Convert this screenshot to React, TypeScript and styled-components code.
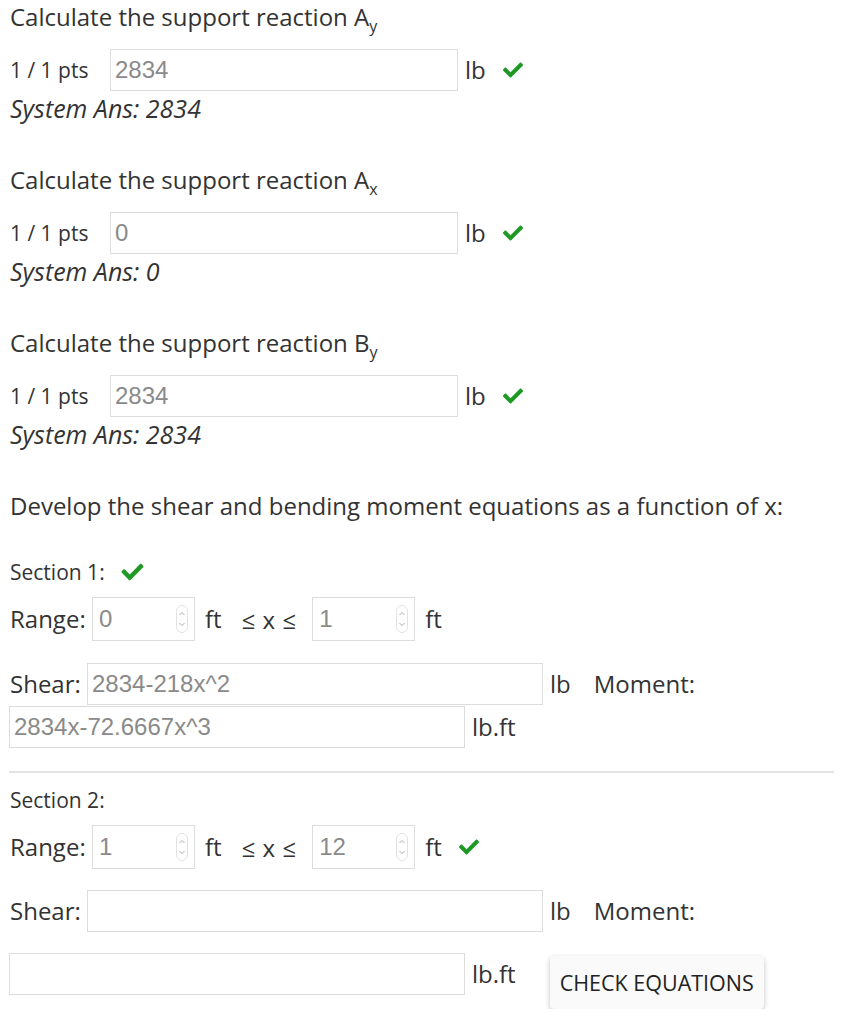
import React from "react";
import styled, { createGlobalStyle } from "styled-components";
import { FaCheck } from "react-icons/fa";

const Global = createGlobalStyle`
  html, body { margin: 0; padding: 0; background: #fff; }
  body { font-family: "Open Sans", "Noto Sans", sans-serif; color: #333; }
  input::-webkit-outer-spin-button, input::-webkit-inner-spin-button { -webkit-appearance: none; margin: 0; }
`;

const Page = styled.div`
  padding: 1px 10px 0 9px;
  width: 851px;
  box-sizing: border-box;
`;

const Question = styled.div`
  margin-bottom: 41px;
`;

const Heading = styled.div`
  font-size: 24px;
  line-height: 32px;
  padding-left: 1px;
  sub { font-size: 16px; vertical-align: -6px; line-height: 0; }
`;

const AnswerRow = styled.div`
  display: flex;
  align-items: center;
  margin-top: 16px;
`;

const Pts = styled.span`
  font-size: 21px;
  width: 101px;
  padding-left: 1px;
  box-sizing: border-box;
`;

const TextInput = styled.input<{ $w: number }>`
  width: ${(p) => p.$w}px;
  height: 42px;
  flex-shrink: 0;
  box-sizing: border-box;
  border: 1px solid #dcdcdc;
  border-radius: 0;
  padding: 0 4px;
  font-family: "Liberation Sans", Arial, sans-serif;
  font-size: 24px;
  color: #8a8a8a;
  background: #fff;
  outline: none;
`;

const Unit = styled.span<{ $ml?: number }>`
  font-size: 24px;
  line-height: 42px;
  margin-left: ${(p) => p.$ml ?? 7}px;
  white-space: nowrap;
`;

const Check = styled(FaCheck)<{ $big?: boolean }>`
  color: #1e9a24;
  width: ${(p) => (p.$big ? 27 : 24)}px;
  height: ${(p) => (p.$big ? 22 : 20)}px;
  margin-left: ${(p) => (p.$big ? 14 : 15)}px;
`;

const SystemAns = styled.div`
  font-size: 25px;
  font-style: italic;
  line-height: 30px;
  margin-top: 2px;
  padding-left: 1px;
`;

const SectionTitle = styled.div<{ $mt: number }>`
  font-size: 21px;
  line-height: 28px;
  margin-top: ${(p) => p.$mt}px;
  display: flex;
  align-items: center;
  padding-left: 1px;
`;

const RangeRow = styled.div`
  display: flex;
  align-items: center;
  margin-top: 11px;
  height: 44px;
`;

const Label = styled.span<{ $w: number }>`
  font-size: 24px;
  line-height: 42px;
  width: ${(p) => p.$w}px;
  flex-shrink: 0;
  padding-left: 1px;
  box-sizing: border-box;
`;

const NumWrap = styled.div`
  position: relative;
  width: 103px;
  height: 44px;
  flex-shrink: 0;
`;

const NumInput = styled(TextInput)`
  height: 44px;
  padding-left: 6px;
  -moz-appearance: textfield;
`;

const Spinner = styled.svg`
  position: absolute;
  right: 7px;
  top: 8px;
  width: 12px;
  height: 28px;
`;

const Leq = styled.span`
  font-size: 24px;
  margin: 0 16px 0 20px;
  word-spacing: 1px;
`;

const EqRow = styled.div<{ $mt: number }>`
  display: flex;
  align-items: flex-start;
  margin-top: ${(p) => p.$mt}px;
`;

const Divider = styled.hr`
  border: 0;
  border-top: 2px solid #e2e2e2;
  margin: 23px 7px 0 0;
`;

const Button = styled.button`
  margin: 3px 0 0 34px;
  height: 53px;
  padding: 0 10px;
  border: 0;
  border-radius: 4px;
  background: #fafafa;
  box-shadow: 0 2px 5px rgba(0, 0, 0, 0.25);
  font-family: "Open Sans", sans-serif;
  font-size: 21.5px;
  color: #222;
  text-transform: uppercase;
  white-space: nowrap;
`;

const Sub = ({ c }: { c: string }) => <sub>{c}</sub>;

const SpinIcon = () => (
  <Spinner viewBox="0 0 12 28">
    <rect x="0.5" y="0.5" width="11" height="27" rx="5.5" fill="#fff" stroke="#e2e2e2" />
    <path d="M3.5 10 L6 7.5 L8.5 10" fill="none" stroke="#aaa" strokeWidth="1" />
    <path d="M3.5 18 L6 20.5 L8.5 18" fill="none" stroke="#aaa" strokeWidth="1" />
  </Spinner>
);

const Num = ({ v }: { v: string }) => (
  <NumWrap>
    <NumInput $w={103} type="text" defaultValue={v} />
    <SpinIcon />
  </NumWrap>
);

const Reaction = ({ letter, sub, value }: { letter: string; sub: string; value: string }) => (
  <Question>
    <Heading>
      Calculate the support reaction {letter}
      <Sub c={sub} />
    </Heading>
    <AnswerRow>
      <Pts>1 / 1 pts</Pts>
      <TextInput $w={348} defaultValue={value} />
      <Unit>lb</Unit>
      <Check />
    </AnswerRow>
    <SystemAns>System Ans: {value}</SystemAns>
  </Question>
);

export default function App() {
  return (
    <Page>
      <Global />
      <Reaction letter="A" sub="y" value="2834" />
      <Reaction letter="A" sub="x" value="0" />
      <Reaction letter="B" sub="y" value="2834" />
      <Heading>Develop the shear and bending moment equations as a function of x:</Heading>

      <SectionTitle $mt={36}>
        Section 1:
        <Check $big />
      </SectionTitle>
      <RangeRow>
        <Label $w={83}>Range:</Label>
        <Num v="0" />
        <Unit $ml={10}>ft</Unit>
        <Leq>≤ x ≤</Leq>
        <Num v="1" />
        <Unit $ml={10}>ft</Unit>
      </RangeRow>
      <EqRow $mt={22}>
        <Label $w={78}>Shear:</Label>
        <TextInput $w={456} defaultValue="2834-218x^2" />
        <Unit>lb</Unit>
        <Unit $ml={23}>Moment:</Unit>
      </EqRow>
      <EqRow $mt={1}>
        <TextInput $w={456} defaultValue="2834x-72.6667x^3" />
        <Unit>lb.ft</Unit>
      </EqRow>
      <Divider />

      <SectionTitle $mt={13}>Section 2:</SectionTitle>
      <RangeRow>
        <Label $w={83}>Range:</Label>
        <Num v="1" />
        <Unit $ml={10}>ft</Unit>
        <Leq>≤ x ≤</Leq>
        <Num v="12" />
        <Unit $ml={10}>ft</Unit>
        <Check />
      </RangeRow>
      <EqRow $mt={21}>
        <Label $w={78}>Shear:</Label>
        <TextInput $w={456} defaultValue="" />
        <Unit>lb</Unit>
        <Unit $ml={23}>Moment:</Unit>
      </EqRow>
      <EqRow $mt={21}>
        <TextInput $w={456} defaultValue="" />
        <Unit>lb.ft</Unit>
        <Button>Check Equations</Button>
      </EqRow>
    </Page>
  );
}
